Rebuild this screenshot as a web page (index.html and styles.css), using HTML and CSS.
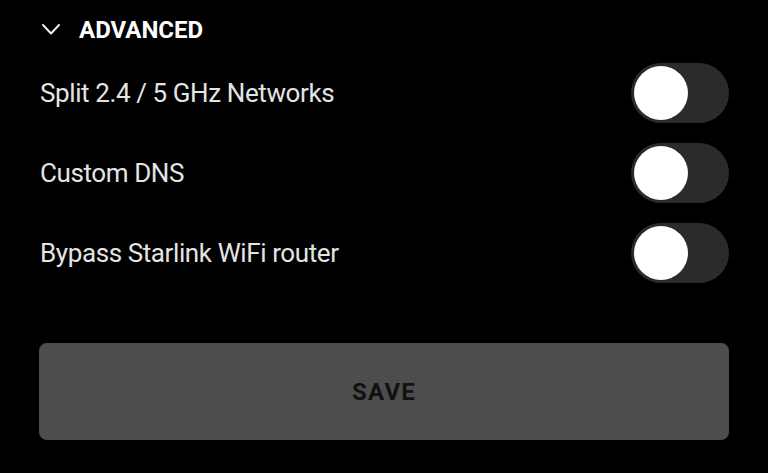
FILE: index.html
```html
<!DOCTYPE html>
<html lang="en">
<head>
<meta charset="utf-8">
<title>Advanced</title>
<link rel="stylesheet" href="styles.css">
</head>
<body>
<main class="panel">
  <div class="section-head">
    <svg class="chevron" width="18" height="11" viewBox="0 0 18 11" aria-hidden="true">
      <path d="M1 1 L9 9.5 L17 1" fill="none" stroke="#f2f2f2" stroke-width="1.9" stroke-linecap="round" stroke-linejoin="round"/>
    </svg>
    <span class="section-title">ADVANCED</span>
  </div>
  <div class="options">
    <div class="option">
      <span class="option-label">Split 2.4 / 5 GHz Networks</span>
      <span class="switch"><span class="knob"></span></span>
    </div>
    <div class="option">
      <span class="option-label">Custom DNS</span>
      <span class="switch"><span class="knob"></span></span>
    </div>
    <div class="option">
      <span class="option-label">Bypass Starlink WiFi router</span>
      <span class="switch"><span class="knob"></span></span>
    </div>
  </div>
  <button class="save" type="button">SAVE</button>
</main>
</body>
</html>
```

FILE: styles.css
```css
html, body {
  margin: 0;
  padding: 0;
  background: #000;
  height: 100%;
  overflow: hidden;
}

body {
  font-family: Roboto, "Liberation Sans", sans-serif;
  color: #e6e6e6;
}

.panel {
  display: flex;
  flex-direction: column;
  padding: 0 39px 0 39px;
}

.section-head {
  height: 60px;
  display: flex;
  align-items: center;
  gap: 19px;
  padding-left: 3px;
}

.chevron {
  display: block;
  margin-top: -1px;
}

.section-title {
  font-size: 24px;
  font-weight: 700;
  color: #fff;
}

.options {
  margin-top: 3px;
  display: flex;
  flex-direction: column;
  gap: 20px;
}

.option {
  height: 60px;
  display: flex;
  align-items: center;
  justify-content: space-between;
  padding-left: 1px;
}

.option-label {
  font-size: 26px;
  letter-spacing: -0.4px;
  color: #e4e4e4;
}

.switch {
  width: 98px;
  height: 60px;
  border-radius: 30px;
  background: #2b2b2d;
  display: flex;
  align-items: center;
  padding-left: 3px;
  box-sizing: border-box;
}

.knob {
  width: 54px;
  height: 54px;
  border-radius: 50%;
  background: #fff;
}

.save {
  margin-top: 60px;
  height: 97px;
  border: none;
  border-radius: 8px;
  background: #4d4d4d;
  color: #111;
  font-family: Roboto, "Liberation Sans", sans-serif;
  font-size: 24px;
  font-weight: 700;
  letter-spacing: 1.2px;
  padding: 0;
}
```
